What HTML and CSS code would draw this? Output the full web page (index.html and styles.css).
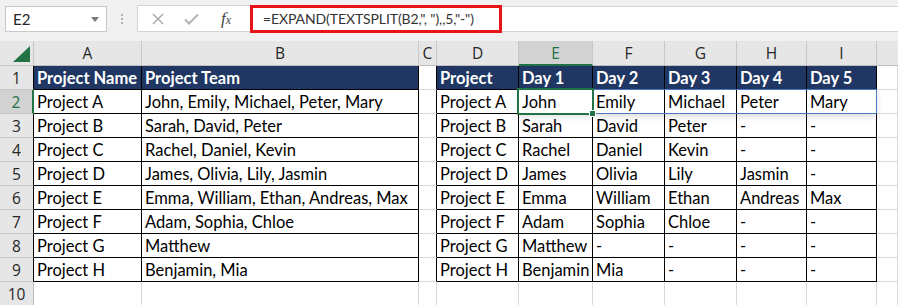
FILE: index.html
```html
<!DOCTYPE html>
<html>
<head>
<meta charset="utf-8">
<link rel="stylesheet" href="styles.css">
</head>
<body>
<div class="toolbar">
  <div class="namebox"><span>E2</span><span class="caret"></span></div>
  <div class="dots"><i></i><i></i><i></i></div>
  <div class="fbtns">
    <svg class="ico-x" width="12" height="12" viewBox="0 0 12 12"><path d="M1 1L11 11M11 1L1 11" stroke="#a6a6a6" stroke-width="1.4" fill="none"/></svg>
    <svg class="ico-ok" width="15" height="12" viewBox="0 0 15 12"><path d="M1 6.5L5 10.5L14 1.5" stroke="#b3b3b3" stroke-width="2" fill="none"/></svg>
    <span class="fx">f<span class="fxx">x</span></span>
  </div>
  <div class="finput"><div class="redbox">=EXPAND(TEXTSPLIT(B2,", "),,5,"-")</div></div>
</div>

<div class="sheet">
  <div class="cell corner"><svg width="17" height="16" viewBox="0 0 17 16"><polygon points="17,0 17,16 0,16" fill="#217346"/></svg></div>
  <div class="cell ch">A</div><div class="cell ch">B</div><div class="cell ch">C</div><div class="cell ch">D</div>
  <div class="cell ch sel">E</div><div class="cell ch">F</div><div class="cell ch">G</div><div class="cell ch">H</div><div class="cell ch">I</div><div class="cell ch last"></div>

  <div class="cell rh lt">1</div>
  <div class="cell t h">Project Name</div><div class="cell t h">Project Team</div><div class="cell lt"></div>
  <div class="cell t h">Project</div><div class="cell t h">Day 1</div><div class="cell t h">Day 2</div><div class="cell t h">Day 3</div><div class="cell t h">Day 4</div><div class="cell t h">Day 5</div><div class="cell"></div>

  <div class="cell rh lt rsel">2</div>
  <div class="cell t">Project A</div><div class="cell t">John, Emily, Michael, Peter, Mary</div><div class="cell lt"></div>
  <div class="cell t">Project A</div><div class="cell t">John</div><div class="cell t">Emily</div><div class="cell t">Michael</div><div class="cell t">Peter</div><div class="cell t">Mary</div><div class="cell"></div>

  <div class="cell rh lt">3</div>
  <div class="cell t">Project B</div><div class="cell t">Sarah, David, Peter</div><div class="cell lt"></div>
  <div class="cell t">Project B</div><div class="cell t">Sarah</div><div class="cell t">David</div><div class="cell t">Peter</div><div class="cell t">-</div><div class="cell t">-</div><div class="cell"></div>

  <div class="cell rh lt">4</div>
  <div class="cell t">Project C</div><div class="cell t">Rachel, Daniel, Kevin</div><div class="cell lt"></div>
  <div class="cell t">Project C</div><div class="cell t">Rachel</div><div class="cell t">Daniel</div><div class="cell t">Kevin</div><div class="cell t">-</div><div class="cell t">-</div><div class="cell"></div>

  <div class="cell rh lt">5</div>
  <div class="cell t">Project D</div><div class="cell t">James, Olivia, Lily, Jasmin</div><div class="cell lt"></div>
  <div class="cell t">Project D</div><div class="cell t">James</div><div class="cell t">Olivia</div><div class="cell t">Lily</div><div class="cell t">Jasmin</div><div class="cell t">-</div><div class="cell"></div>

  <div class="cell rh lt">6</div>
  <div class="cell t">Project E</div><div class="cell t">Emma, William, Ethan, Andreas, Max</div><div class="cell lt"></div>
  <div class="cell t">Project E</div><div class="cell t">Emma</div><div class="cell t">William</div><div class="cell t">Ethan</div><div class="cell t">Andreas</div><div class="cell t">Max</div><div class="cell"></div>

  <div class="cell rh lt">7</div>
  <div class="cell t">Project F</div><div class="cell t">Adam, Sophia, Chloe</div><div class="cell lt"></div>
  <div class="cell t">Project F</div><div class="cell t">Adam</div><div class="cell t">Sophia</div><div class="cell t">Chloe</div><div class="cell t">-</div><div class="cell t">-</div><div class="cell"></div>

  <div class="cell rh lt">8</div>
  <div class="cell t">Project G</div><div class="cell t">Matthew</div><div class="cell lt"></div>
  <div class="cell t">Project G</div><div class="cell t">Matthew</div><div class="cell t">-</div><div class="cell t">-</div><div class="cell t">-</div><div class="cell t">-</div><div class="cell"></div>

  <div class="cell rh lt">9</div>
  <div class="cell t">Project H</div><div class="cell t">Benjamin, Mia</div><div class="cell lt"></div>
  <div class="cell t">Project H</div><div class="cell t">Benjamin</div><div class="cell t">Mia</div><div class="cell t">-</div><div class="cell t">-</div><div class="cell t">-</div><div class="cell"></div>

  <div class="cell rh">10</div>
  <div class="cell"></div><div class="cell"></div><div class="cell"></div><div class="cell"></div><div class="cell"></div>
  <div class="cell"></div><div class="cell"></div><div class="cell"></div><div class="cell"></div><div class="cell"></div>

  <div class="spill"></div>
  <div class="selbox"><span class="handle"></span></div>
</div>
</body>
</html>
```

FILE: styles.css
```css
html, body {
  margin: 0;
  padding: 0;
  background: #ffffff;
}
body {
  width: 898px;
  height: 305px;
  overflow: hidden;
  font-family: "Lato", "Open Sans", sans-serif;
}

/* ---------- formula toolbar ---------- */
.toolbar {
  height: 41px;
  box-sizing: border-box;
  background: #f1f1f1;
  display: flex;
  align-items: flex-start;
  padding-top: 6px;
}
.namebox {
  margin-left: 5px;
  width: 102px;
  height: 26px;
  box-sizing: border-box;
  background: #fff;
  border: 1px solid #c8c8c8;
  display: flex;
  align-items: center;
  padding-left: 7px;
  font-size: 15px;
  color: #262626;
}
.caret {
  margin-left: auto;
  margin-right: 7px;
  width: 0;
  height: 0;
  border-left: 4px solid transparent;
  border-right: 4px solid transparent;
  border-top: 5px solid #7a7a7a;
}
.dots {
  width: 30px;
  height: 26px;
  display: flex;
  flex-direction: column;
  align-items: center;
  justify-content: center;
  gap: 2px;
}
.dots i {
  display: block;
  width: 2px;
  height: 2px;
  background: #b0b0b0;
}
.fbtns {
  width: 113px;
  height: 27px;
  margin-top: -1px;
  box-sizing: border-box;
  background: #fff;
  border: 1px solid #d4d4d4;
  border-right: none;
  display: flex;
  align-items: center;
}
.ico-x { margin-left: 14px; }
.ico-ok { margin-left: 20px; }
.fx {
  margin-left: 22px;
  font-family: "Liberation Serif", serif;
  font-style: italic;
  font-size: 17px;
  color: #444;
}
.fxx { font-size: 12px; }
.finput {
  flex: 1;
  height: 26px;
  box-sizing: border-box;
  background: #fff;
  border-top: 1px solid #d4d4d4;
  border-bottom: 1px solid #d4d4d4;
}
.redbox {
  width: 252px;
  height: 28px;
  margin-top: -2px;
  box-sizing: border-box;
  border: 3px solid #e8141a;
  padding-left: 10px;
  font-size: 14px;
  letter-spacing: -0.1px;
  line-height: 22px;
  color: #333;
  white-space: nowrap;
}

/* ---------- sheet ---------- */
.sheet {
  position: relative;
  display: grid;
  grid-template-columns: 34px 108px 277px 18px 82px 74px 72px 72px 70px 70px 1fr;
  grid-template-rows: 25px repeat(10, 24px);
  font-family: "Lato", "Open Sans", sans-serif;
  font-size: 16.5px;
  color: #000;
}
.cell {
  box-sizing: border-box;
  border-right: 1px solid #d9d9d9;
  border-bottom: 1px solid #d9d9d9;
  padding: 0 3px;
  line-height: 24px;
  white-space: nowrap;
  overflow: hidden;
}
.corner {
  background: #e6e6e6;
  border-right-color: #c6c6c6;
  border-bottom-color: #c6c6c6;
  padding: 0;
  position: relative;
}
.corner svg {
  position: absolute;
  right: 3px;
  bottom: 3px;
}
.ch {
  background: #e6e6e6;
  border-right-color: #c8c8c8;
  border-bottom-color: #bdbdbd;
  text-align: center;
  color: #262626;
  font-family: "Open Sans", sans-serif;
  font-size: 15.5px;
  line-height: 25px;
}
.ch.sel {
  background: #d2d2d2;
  color: #217346;
  border-bottom: 2px solid #217346;
  line-height: 24px;
}
.ch.last { border-right: none; }
.rh {
  background: #e6e6e6;
  text-align: center;
  color: #262626;
  border-bottom-color: #c8c8c8;
  border-right-color: #bdbdbd;
  font-family: "Open Sans", sans-serif;
  font-size: 15.5px;
  padding: 0;
}
.rh.rsel {
  background: #d2d2d2;
  color: #217346;
  border-right: 2px solid #217346;
}
.lt { border-right-color: #000; }
.rh.lt.rsel { border-right-color: #217346; }
.t {
  border-right-color: #000;
  border-bottom-color: #000;
}
.h {
  background: #203764;
  color: #fff;
  font-weight: bold;
}

.spill {
  grid-column: 6 / 11;
  grid-row: 3 / 4;
  position: absolute;
  top: -1px;
  left: -1px;
  right: 0;
  bottom: 0;
  border: 1px solid #4a78c2;
  box-shadow: 0 3px 6px rgba(0, 0, 0, 0.12);
  pointer-events: none;
}
.selbox {
  grid-column: 6 / 7;
  grid-row: 3 / 4;
  position: absolute;
  top: -2px;
  left: -2px;
  right: -1px;
  bottom: -1px;
  border: 2px solid #217346;
  pointer-events: none;
}
.handle {
  position: absolute;
  right: -4px;
  bottom: -4px;
  width: 5px;
  height: 5px;
  background: #217346;
  border: 1px solid #fff;
}
```
